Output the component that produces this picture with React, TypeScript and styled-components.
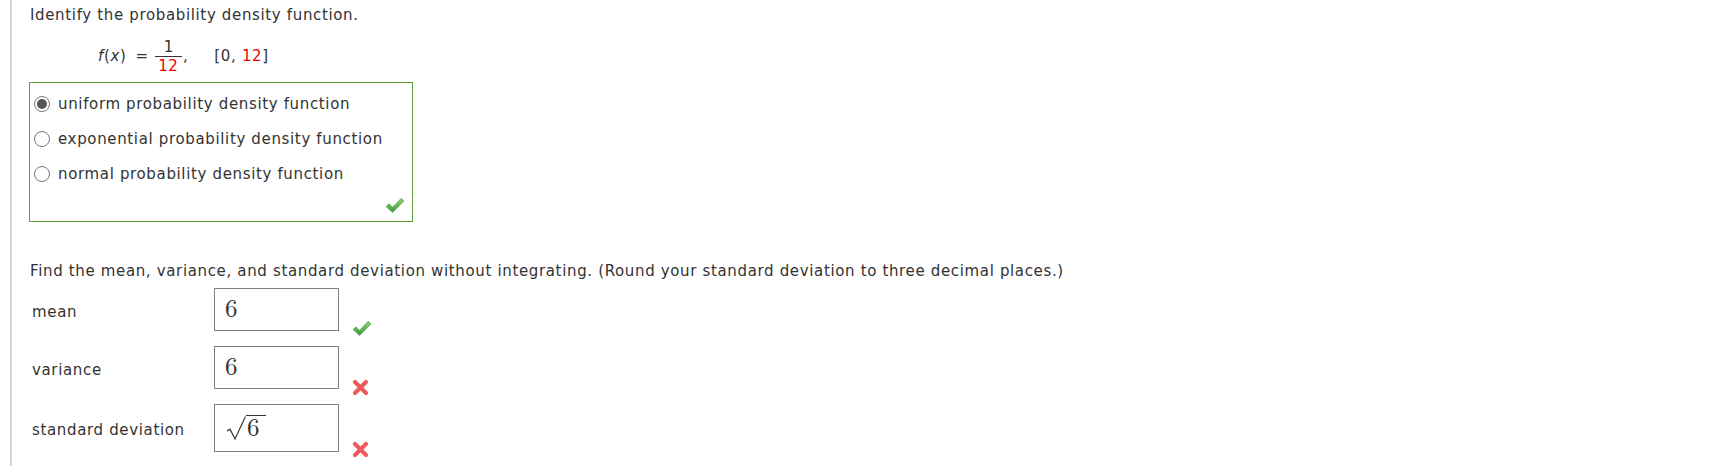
import React from "react";
import styled, { createGlobalStyle } from "styled-components";

const Global = createGlobalStyle`
  html, body { margin: 0; padding: 0; background: #fff; }
  body { font-family: "DejaVu Sans", Verdana, sans-serif; color: #333; letter-spacing: 0.65px; }
`;

const Page = styled.div`
  margin-left: 10px;
  border-left: 2px solid #d4d4d4;
  min-height: 466px;
  padding: 4px 0 0 18px;
  box-sizing: border-box;
`;

const Prompt = styled.div`
  font-size: 15px;
  line-height: 22px;
`;

const Formula = styled.div`
  display: flex;
  align-items: center;
  margin: 10px 0 0 68px;
  font-size: 15px;
  height: 40px;
`;

const Ital = styled.span`
  font-style: italic;
`;

const Eq = styled.span`
  margin: 0 6px 0 9px;
`;

const Frac = styled.span`
  display: inline-flex;
  flex-direction: column;
  align-items: center;
  margin: 0 1px 0 0;
  font-size: 15px;
  line-height: 18px;
`;

const Num = styled.span`
  padding: 0 8px 0 9px;
  border-bottom: 1px solid #333;
`;

const Red = styled.span`
  color: #e00;
`;

const Interval = styled.span`
  margin-left: 26px;
`;

const ChoiceBox = styled.div`
  position: relative;
  width: 384px;
  height: 140px;
  margin-top: 6px;
  margin-left: -1px;
  border: 1px solid #63a033;
  box-sizing: border-box;
  padding-top: 3px;
`;

const Choice = styled.label`
  display: flex;
  align-items: center;
  height: 35px;
  padding-left: 4px;
  font-size: 15px;
  gap: 8px;
`;

const Radio = styled.span<{ $on?: boolean }>`
  width: 14px;
  height: 14px;
  border-radius: 50%;
  border: 1px solid #777;
  background: #fff;
  display: flex;
  align-items: center;
  justify-content: center;
  &::after {
    content: "";
    display: ${(p) => (p.$on ? "block" : "none")};
    width: 10px;
    height: 10px;
    border-radius: 50%;
    background: #555;
  }
`;

const BoxMark = styled.span`
  position: absolute;
  right: 7px;
  bottom: 7px;
  display: flex;
`;

const Instruction = styled.div`
  margin-top: 38px;
  font-size: 15px;
  line-height: 22px;
`;

const AnswerGrid = styled.div`
  display: grid;
  grid-template-columns: 184px 125px 38px;
  margin-top: 6px;
`;

const Label = styled.div`
  font-size: 15px;
  display: flex;
  align-items: center;
  padding: 4px 0 0 2px;
`;

const Field = styled.div<{ $h: number }>`
  height: ${(p) => p.$h}px;
  border: 1px solid #808080;
  box-sizing: border-box;
  display: flex;
  align-items: center;
  padding-left: 10px;
  font-family: "Latin Modern Math", "Liberation Serif", "DejaVu Serif", serif;
  font-size: 25px;
  letter-spacing: 0;
  color: #333;
`;

const Row = styled.div`
  display: contents;
`;

const MarkCell = styled.div<{ $pad: number }>`
  display: flex;
  align-items: flex-end;
  padding-left: 13px;
  margin-bottom: ${(p) => p.$pad}px;
`;

const Spacer = styled.div<{ $h: number }>`
  grid-column: 1 / -1;
  height: ${(p) => p.$h}px;
`;

const Sqrt = styled.span`
  display: inline-flex;
  align-items: flex-end;
  margin-left: 1px;
`;

const Radicand = styled.span`
  border-top: 1px solid #333;
  padding: 0 6px 0 1px;
  line-height: 25px;
`;

const Check = () => (
  <svg width="20" height="17" viewBox="0 0 20 17">
    <defs>
      <linearGradient id="cg" x1="0" y1="0" x2="0" y2="1">
        <stop offset="0" stopColor="#8fd07a" />
        <stop offset="1" stopColor="#3e9a3a" />
      </linearGradient>
    </defs>
    <path
      d="M1 9.5 L4 6.8 L7.6 10.2 L16.2 1.2 L19 4 L7.6 15.6 Z"
      fill="url(#cg)"
      stroke="#4c9e42"
      strokeWidth="0.6"
      strokeLinejoin="round"
    />
  </svg>
);

const Cross = () => (
  <svg width="17" height="17" viewBox="0 0 17 17">
    <path
      d="M3 3 L14 14 M14 3 L3 14"
      stroke="#f05a5a"
      strokeWidth="4.2"
      strokeLinecap="round"
    />
  </svg>
);

const SqrtSign = () => (
  <svg width="20" height="25" viewBox="0 0 20 25">
    <path d="M1 15 L4 13.2 L9 23 L19.5 0.5" fill="none" stroke="#333" strokeWidth="1.2" />
  </svg>
);

export default function App() {
  return (
    <>
      <Global />
      <Page>
        <Prompt>Identify the probability density function.</Prompt>
        <Formula>
          <Ital>f</Ital>(<Ital>x</Ital>)<Eq>=</Eq>
          <Frac>
            <Num>1</Num>
            <Red>12</Red>
          </Frac>
          ,
          <Interval>
            [0, <Red>12</Red>]
          </Interval>
        </Formula>
        <ChoiceBox>
          <Choice>
            <Radio $on />
            uniform probability density function
          </Choice>
          <Choice>
            <Radio />
            exponential probability density function
          </Choice>
          <Choice>
            <Radio />
            normal probability density function
          </Choice>
          <BoxMark>
            <Check />
          </BoxMark>
        </ChoiceBox>
        <Instruction>
          Find the mean, variance, and standard deviation without integrating. (Round your standard
          deviation to three decimal places.)
        </Instruction>
        <AnswerGrid>
          <Row>
            <Label>mean</Label>
            <Field $h={43}>6</Field>
            <MarkCell $pad={-6}>
              <Check />
            </MarkCell>
          </Row>
          <Spacer $h={15} />
          <Row>
            <Label>variance</Label>
            <Field $h={43}>6</Field>
            <MarkCell $pad={-7}>
              <Cross />
            </MarkCell>
          </Row>
          <Spacer $h={15} />
          <Row>
            <Label>standard deviation</Label>
            <Field $h={48}>
              <Sqrt>
                <SqrtSign />
                <Radicand>6</Radicand>
              </Sqrt>
            </Field>
            <MarkCell $pad={-6}>
              <Cross />
            </MarkCell>
          </Row>
        </AnswerGrid>
      </Page>
    </>
  );
}
